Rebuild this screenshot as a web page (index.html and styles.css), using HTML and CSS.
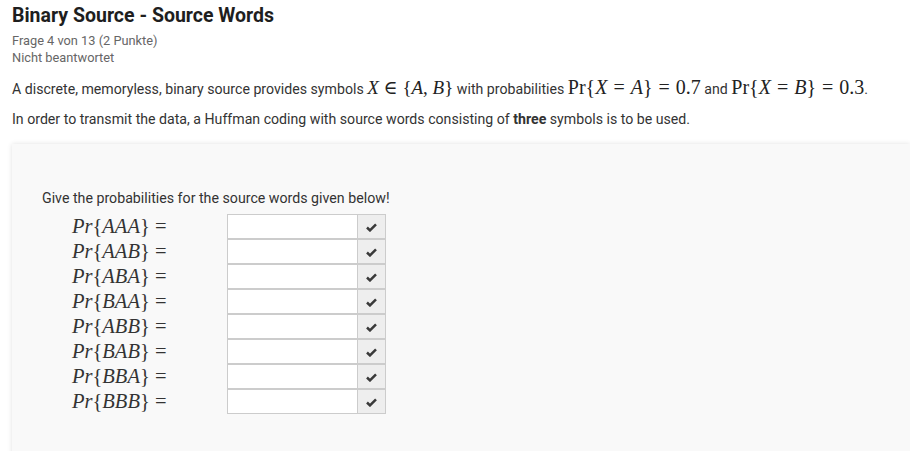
FILE: index.html
```html
<!DOCTYPE html>
<html>
<head>
<meta charset="utf-8">
<link rel="stylesheet" href="styles.css">
</head>
<body>
<div class="page">
  <h1 class="title">Binary Source - Source Words</h1>
  <div class="meta">Frage 4 von 13 (2 Punkte)</div>
  <div class="meta">Nicht beantwortet</div>
  <p class="para">A discrete, memoryless, binary source provides symbols <span class="m"><i>X</i> ∈ {<i>A</i>, <i>B</i>}</span> with probabilities <span class="m wide">Pr{<i>X</i> = <i>A</i>} = 0.7</span> and <span class="m wide">Pr{<i>X</i> = <i>B</i>} = 0.3</span>.</p>
  <p class="para">In order to transmit the data, a Huffman coding with source words consisting of <b>three</b> symbols is to be used.</p>
  <div class="box">
    <div class="prompt">Give the probabilities for the source words given below!</div>
    <div class="rows">
      <div class="row"><span class="lab"><i>Pr</i>{<i>AAA</i>} =</span><span class="field"><span class="inp"></span><span class="btn"><svg viewBox="0 0 12 10" width="11" height="9"><path d="M1 5 L4.3 8.2 L11 1.5" fill="none" stroke="#3a3a3a" stroke-width="2.8"/></svg></span></span></div>
      <div class="row"><span class="lab"><i>Pr</i>{<i>AAB</i>} =</span><span class="field"><span class="inp"></span><span class="btn"><svg viewBox="0 0 12 10" width="11" height="9"><path d="M1 5 L4.3 8.2 L11 1.5" fill="none" stroke="#3a3a3a" stroke-width="2.8"/></svg></span></span></div>
      <div class="row"><span class="lab"><i>Pr</i>{<i>ABA</i>} =</span><span class="field"><span class="inp"></span><span class="btn"><svg viewBox="0 0 12 10" width="11" height="9"><path d="M1 5 L4.3 8.2 L11 1.5" fill="none" stroke="#3a3a3a" stroke-width="2.8"/></svg></span></span></div>
      <div class="row"><span class="lab"><i>Pr</i>{<i>BAA</i>} =</span><span class="field"><span class="inp"></span><span class="btn"><svg viewBox="0 0 12 10" width="11" height="9"><path d="M1 5 L4.3 8.2 L11 1.5" fill="none" stroke="#3a3a3a" stroke-width="2.8"/></svg></span></span></div>
      <div class="row"><span class="lab"><i>Pr</i>{<i>ABB</i>} =</span><span class="field"><span class="inp"></span><span class="btn"><svg viewBox="0 0 12 10" width="11" height="9"><path d="M1 5 L4.3 8.2 L11 1.5" fill="none" stroke="#3a3a3a" stroke-width="2.8"/></svg></span></span></div>
      <div class="row"><span class="lab"><i>Pr</i>{<i>BAB</i>} =</span><span class="field"><span class="inp"></span><span class="btn"><svg viewBox="0 0 12 10" width="11" height="9"><path d="M1 5 L4.3 8.2 L11 1.5" fill="none" stroke="#3a3a3a" stroke-width="2.8"/></svg></span></span></div>
      <div class="row"><span class="lab"><i>Pr</i>{<i>BBA</i>} =</span><span class="field"><span class="inp"></span><span class="btn"><svg viewBox="0 0 12 10" width="11" height="9"><path d="M1 5 L4.3 8.2 L11 1.5" fill="none" stroke="#3a3a3a" stroke-width="2.8"/></svg></span></span></div>
      <div class="row"><span class="lab"><i>Pr</i>{<i>BBB</i>} =</span><span class="field"><span class="inp"></span><span class="btn"><svg viewBox="0 0 12 10" width="11" height="9"><path d="M1 5 L4.3 8.2 L11 1.5" fill="none" stroke="#3a3a3a" stroke-width="2.8"/></svg></span></span></div>
    </div>
  </div>
</div>
</body>
</html>
```
FILE: styles.css
```css
html, body {
  margin: 0;
  padding: 0;
  background: #fff;
  overflow: hidden;
}
body {
  font-family: Roboto, "Liberation Sans", sans-serif;
  color: #333;
}
.page {
  padding: 4px 0 0 12px;
}
.title {
  margin: 0;
  font-size: 19.5px;
  font-weight: 700;
  color: #1e1e1e;
  line-height: 23px;
}
.meta {
  font-size: 12.8px;
  color: #666;
  line-height: 17px;
}
.meta:first-of-type {
  margin-top: 5px;
}
.para {
  margin: 0;
  font-size: 14.15px;
  line-height: 20px;
  color: #333;
}
.para:first-of-type {
  margin-top: 11px;
}
.para + .para {
  margin-top: 10px;
}
.m {
  font-family: "Liberation Serif", "DejaVu Serif", serif;
  font-size: 19px;
  line-height: 20px;
  color: #222;
}
.m.wide {
  font-size: 20px;
  word-spacing: 1px;
}
.m i {
  font-style: italic;
}
.box {
  margin-top: 15px;
  background: #f9f9f9;
  box-shadow: 0 0 5px rgba(0, 0, 0, 0.12);
  padding: 44px 0 60px 30px;
  min-height: 300px;
}
.prompt {
  font-size: 14.2px;
  line-height: 20px;
  color: #333;
  margin-bottom: 6px;
}
.rows {
  display: flex;
  flex-direction: column;
  padding-left: 30px;
}
.row {
  display: flex;
  align-items: center;
  height: 25px;
}
.lab {
  width: 155px;
  font-family: "Liberation Serif", "DejaVu Serif", serif;
  font-size: 20.5px;
  color: #333;
  line-height: 25px;
}
.field {
  display: flex;
  height: 25px;
}
.inp {
  width: 129px;
  height: 23px;
  background: #fff;
  border: 1px solid #ccc;
}
.btn {
  width: 28px;
  height: 25px;
  background: #eee;
  border: 1px solid #ccc;
  border-left: none;
  display: flex;
  align-items: center;
  justify-content: center;
  padding-top: 2px;
  box-sizing: border-box;
}
```
